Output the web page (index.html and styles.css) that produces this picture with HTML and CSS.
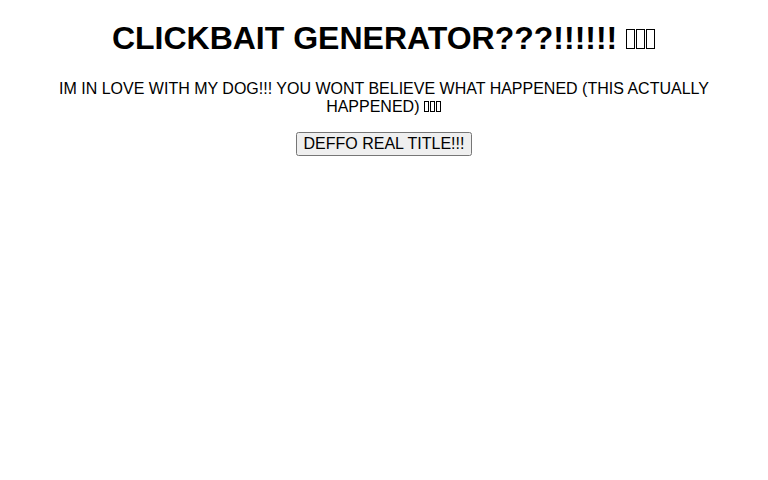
FILE: index.html
```html
<!DOCTYPE html>
<html lang="en">

<head>
    <meta charset="UTF-8">
    <meta name="viewport" content="width=device-width, initial-scale=1.0">
    <title>Clickbait Generator</title>
    <link rel="stylesheet" href="styles.css">
</head>

<body>
    <h1 class="title">CLICKBAIT GENERATOR???!!!!!! <span class="tofu"></span><span class="tofu"></span><span class="tofu"></span></h1>
    <p id="headline" class="headline">IM IN LOVE WITH MY DOG!!! YOU WONT BELIEVE WHAT HAPPENED (THIS ACTUALLY HAPPENED) <span class="tofu"></span><span class="tofu"></span><span class="tofu"></span></p>
    <button id="generate" class="generate">DEFFO REAL TITLE!!!</button>
</body>

</html>
```

FILE: styles.css
```css
body {
    font-family: 'Liberation Sans', Arial, sans-serif;
    text-align: center;
}

.title {
    font-size: 32px;
    margin: 12px 0 23px;
}

.headline {
    font-size: 16px;
    margin: 0 50px 16px;
}

.tofu {
    display: inline-block;
    width: 0.22em;
    height: 0.56em;
    border: 0.045em solid currentColor;
    margin-right: 0.03em;
    vertical-align: baseline;
}

.generate {
    font-family: 'Liberation Sans', Arial, sans-serif;
    font-size: 16px;
}
```
